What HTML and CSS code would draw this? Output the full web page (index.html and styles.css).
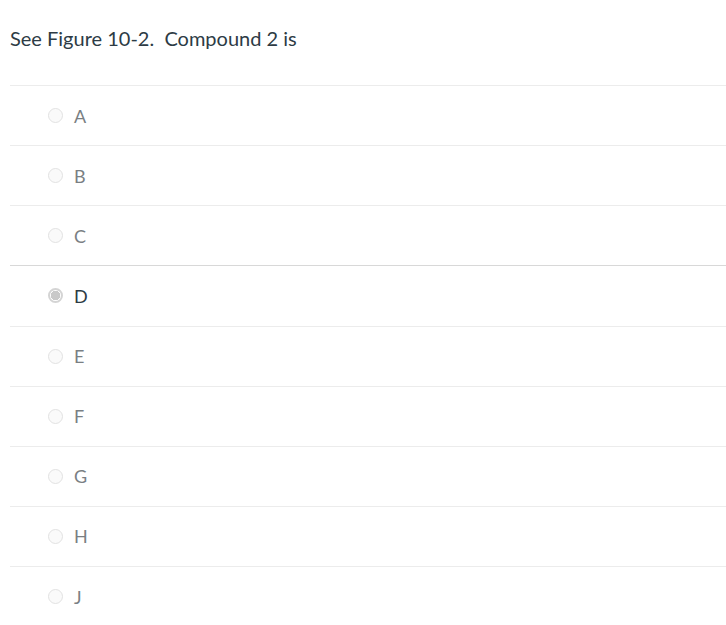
FILE: index.html
```html
<!DOCTYPE html>
<html>
<head>
<meta charset="utf-8">
<link rel="stylesheet" href="styles.css">
</head>
<body>
<div class="question">
  <div class="prompt">See Figure 10-2.&nbsp; Compound 2 is</div>
  <div class="answers">
    <div class="answer"><span class="radio"></span><span class="label">A</span></div>
    <div class="answer"><span class="radio"></span><span class="label">B</span></div>
    <div class="answer"><span class="radio"></span><span class="label">C</span></div>
    <div class="answer selected"><span class="radio"></span><span class="label">D</span></div>
    <div class="answer"><span class="radio"></span><span class="label">E</span></div>
    <div class="answer"><span class="radio"></span><span class="label">F</span></div>
    <div class="answer"><span class="radio"></span><span class="label">G</span></div>
    <div class="answer"><span class="radio"></span><span class="label">H</span></div>
    <div class="answer"><span class="radio"></span><span class="label">J</span></div>
  </div>
</div>
</body>
</html>
```
FILE: styles.css
```css
html, body {
  margin: 0;
  padding: 0;
  background: #fff;
}
body {
  font-family: Lato, "Liberation Sans", sans-serif;
  color: #2d3b45;
  overflow: hidden;
}
.question {
  padding: 0 0 0 10px;
  width: 730px;
}
.prompt {
  font-size: 20px;
  line-height: 24px;
  padding-top: 26px;
  height: 85px;
  box-sizing: border-box;
}
.answers {
  display: flex;
  flex-direction: column;
}
.answer {
  height: 60.125px;
  border-top: 1px solid #ececec;
  display: flex;
  align-items: center;
  padding-left: 38px;
  box-sizing: border-box;
}
.answer.selected {
  border-top-color: #d8d8d8;
}
.radio {
  width: 15px;
  height: 15px;
  border-radius: 50%;
  border: 1px solid #e2e2e2;
  box-sizing: border-box;
  background: #fafafa;
  flex: none;
}
.selected .radio {
  border: 2px solid #d4d4d4;
  background: radial-gradient(circle, #c9c9c9 0 4.5px, #fff 5px);
}
.label {
  font-size: 18px;
  margin-left: 11px;
  color: #7a7f83;
}
.selected .label {
  color: #2d3b45;
}
```
